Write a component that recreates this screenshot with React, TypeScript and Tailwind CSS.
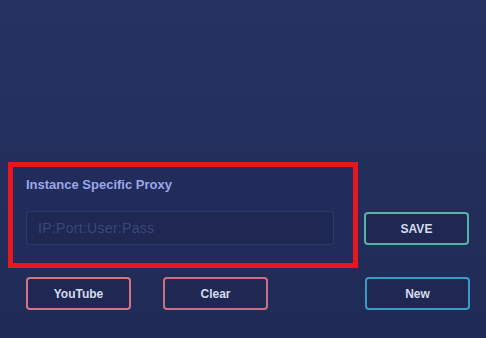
import React from 'react';

function OutlineButton({ label, border, className = '' }: { label: string; border: string; className?: string }) {
    return (
        <button
            className={`flex h-[33px] w-[105px] items-center justify-center rounded-[4px] border-2 bg-[#1f2853] text-[12px] font-bold text-[#d6dbed] ${border} ${className}`}
        >
            {label}
        </button>
    );
}

export default function App() {
    return (
        <div
            className="flex h-[338px] w-[486px] flex-col bg-gradient-to-b from-[#263360] to-[#202a57] pt-[162px]"
            style={{ fontFamily: '"Liberation Sans", Arial, sans-serif' }}
        >
            <div className="flex items-start">
                <div className="ml-[8px] flex h-[106px] w-[350px] flex-col border-[5px] border-[#e8161f] bg-[#222c5a] pl-[13px] pr-[19px] pt-[9px]">
                    <p className="text-[13px] font-bold leading-[17px] text-[#9ba7ea]">Instance Specific Proxy</p>
                    <input
                        placeholder="IP:Port:User:Pass"
                        className="mt-[18px] h-[34px] w-full rounded-[4px] border border-[#2e3a6c] bg-[#1f2853] px-[11px] text-[14px] tracking-[0.3px] text-[#c9d0ee] placeholder:text-[#3c4779] outline-none"
                    />
                </div>
                <OutlineButton label="SAVE" border="border-[#55b3a3]" className="ml-[6px] mt-[50px]" />
            </div>
            <div className="mt-[9px] flex items-center">
                <OutlineButton label="YouTube" border="border-[#d27482]" className="ml-[26px] w-[104px]" />
                <OutlineButton label="Clear" border="border-[#cc6e86]" className="ml-[32px] w-[104px]" />
                <OutlineButton label="New" border="border-[#3a9cc6]" className="ml-[97px] w-[104px]" />
            </div>
        </div>
    );
}
